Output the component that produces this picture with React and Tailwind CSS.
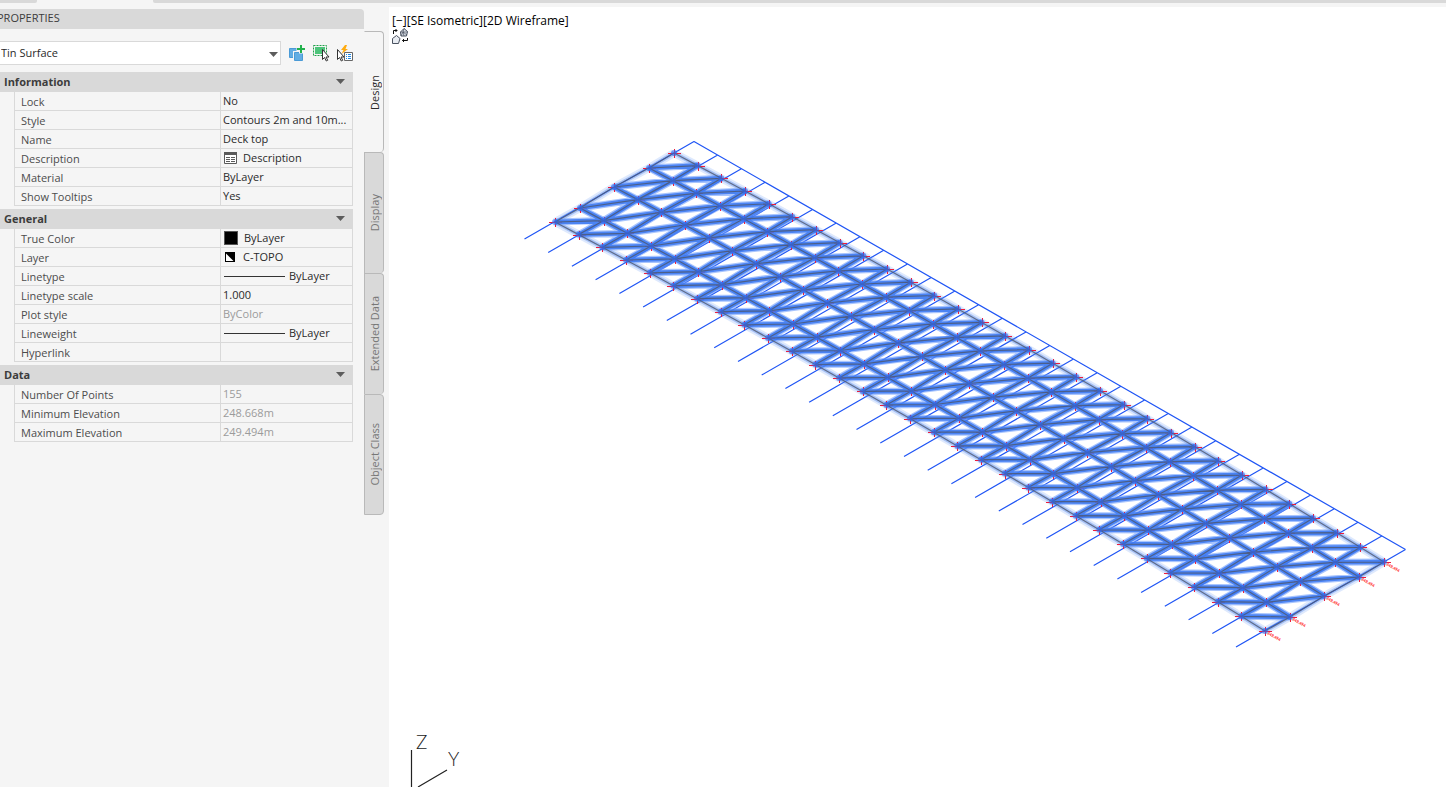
const sections = [
  {
    title: 'Information',
    rows: [
      { label: 'Lock', value: 'No' },
      { label: 'Style', value: 'Contours 2m and 10m...' },
      { label: 'Name', value: 'Deck top' },
      { label: 'Description', value: 'Description', kind: 'sheet' },
      { label: 'Material', value: 'ByLayer' },
      { label: 'Show Tooltips', value: 'Yes' },
    ],
  },
  {
    title: 'General',
    rows: [
      { label: 'True Color', value: 'ByLayer', kind: 'color' },
      { label: 'Layer', value: 'C-TOPO', kind: 'layer' },
      { label: 'Linetype', value: 'ByLayer', kind: 'line' },
      { label: 'Linetype scale', value: '1.000' },
      { label: 'Plot style', value: 'ByColor', muted: true },
      { label: 'Lineweight', value: 'ByLayer', kind: 'line' },
      { label: 'Hyperlink', value: '' },
    ],
  },
  {
    title: 'Data',
    rows: [
      { label: 'Number Of Points', value: '155', muted: true },
      { label: 'Minimum Elevation', value: '248.668m', muted: true },
      { label: 'Maximum Elevation', value: '249.494m', muted: true },
    ],
  },
]

const tabs = ['Design', 'Display', 'Extended Data', 'Object Class']

// surface grid: 31 stations along the deck, 5 points across it
const STATIONS = 31
const across = [[674, 153], [649, 168], [614, 187], [580, 208], [555, 222]]

function gridPoint(i, j) {
  const t = i / (STATIONS - 1)
  const [x, y] = across[j]
  return [x + 710 * t, y + 409 * t - 32 * t * (1 - t)]
}

function segment(a, b) {
  return `M${a[0].toFixed(1)} ${a[1].toFixed(1)}L${b[0].toFixed(1)} ${b[1].toFixed(1)}`
}

const inner = []
const border = []
const points = []
for (let i = 0; i < STATIONS; i++) {
  for (let j = 0; j < across.length; j++) {
    const p = gridPoint(i, j)
    points.push(p)
    if (i < STATIONS - 1) {
      const edge = j === 0 || j === across.length - 1
      ;(edge ? border : inner).push(segment(p, gridPoint(i + 1, j)))
      if (j > 0) inner.push(segment(p, gridPoint(i + 1, j - 1)))
    }
    if (j > 0) {
      const edge = i === 0 || i === STATIONS - 1
      ;(edge ? border : inner).push(segment(p, gridPoint(i, j - 1)))
    }
  }
}
const innerPath = inner.join('')
const borderPath = border.join('')
const crossPath = points
  .map(([x, y]) => `M${Math.round(x) - 6} ${Math.round(y) + 0.5}h13M${Math.round(x) + 0.5} ${Math.round(y) - 4}v9`)
  .join('')

const sectionPath = Array.from({ length: STATIONS }, (_, i) => {
  const x = (i * 711.5) / 30
  const y = i * 13.6
  return segment([694 + x, 141.5 + y], [524.5 + x, 239 + y])
}).join('')

function Caret({ className }) {
  return (
    <svg viewBox="0 0 9 5" className={`h-[5px] w-[9px] ${className}`} aria-hidden="true">
      <path d="M0 0h9L4.5 5z" fill="#5c5c5c" />
    </svg>
  )
}

function PickAddIcon() {
  return (
    <svg viewBox="0 0 17 17" className="size-[17px]" aria-hidden="true">
      <path d="M.5 3.5h8v9h-8z" fill="#62ade3" stroke="#4a9ad6" />
      <path d="M4 6h11v11H4z" fill="#f5f5f5" />
      <path d="M5.500 7.500h8v8h-8z" fill="#62ade3" stroke="#4a9ad6" />
      <path d="M12 0v8.500M7.500 4h9.500" stroke="#f5f5f5" strokeWidth="4" />
      <path d="M12 0v8M8 4h8" stroke="#22b14c" strokeWidth="2" />
    </svg>
  )
}

function SelectIcon() {
  return (
    <svg viewBox="0 0 17 17" className="size-[17px]" aria-hidden="true">
      <path d="M.5.5h13v10H.5z" fill="none" stroke="#22a04a" strokeDasharray="2 1" />
      <path d="M2 2h10v7H2z" fill="#4dc47a" />
      <path d="M9.500 4.500v10l2-2 1.800 3.500 1.400-.7-1.700-3.300h3z" fill="#fff" stroke="#333" />
    </svg>
  )
}

function QuickSelectIcon() {
  return (
    <svg viewBox="0 0 17 17" className="size-[17px]" aria-hidden="true">
      <path d="M8 0L4 5h2.500L4.500 9 11 4H8.500L10 0z" fill="#ffab0f" />
      <path d="M.5 4.500v10l2-2 1.800 3.500 1.400-.7-1.700-3.300h3z" fill="#fff" stroke="#333" />
      <path d="M7.500 7.500h8v8h-8z" fill="#fff" stroke="#666" />
      <path d="M9 9.500h1m1 0h3M9 11.500h1m1 0h3M9 13.500h1m1 0h3" stroke="#1e88e5" />
    </svg>
  )
}

function SheetIcon() {
  return (
    <svg viewBox="0 0 13 12" className="h-3 w-[13px]" aria-hidden="true">
      <path d="M.5.5h12v11H.5z" fill="#fff" stroke="#5a5a5a" />
      <path d="M0 0h13v3H0z" fill="#5a5a5a" />
      <path d="M2 5.500h4m1 0h4M2 7.500h4m1 0h4M2 9.500h4m1 0h4" stroke="#5a5a5a" />
    </svg>
  )
}

function Value({ row }) {
  if (row.kind === 'sheet') {
    return <span className="flex items-center gap-[6px] pl-px"><SheetIcon />{row.value}</span>
  }
  if (row.kind === 'color') {
    return (
      <span className="flex items-center gap-[6px] pl-px">
        <span className="size-[14px] border border-[#555] bg-black" />{row.value}
      </span>
    )
  }
  if (row.kind === 'layer') {
    return (
      <span className="flex items-center gap-2 pl-[2px]">
        <svg viewBox="0 0 10 10" className="size-[10px]" aria-hidden="true">
          <path d="M0 0h10v10H0z" />
          <path d="M1 1.500L8.500 9H1z" fill="#fff" />
        </svg>
        {row.value}
      </span>
    )
  }
  if (row.kind === 'line') {
    return (
      <span className="flex items-center gap-1 pl-px">
        <span className="h-px w-[61px] bg-[#333]" />{row.value}
      </span>
    )
  }
  return row.value
}

function Section({ section }) {
  return (
    <section className="mb-[3px]">
      <h2>
        <button className="flex h-5 w-full items-center justify-between bg-[#d9d9d9] pr-2 pb-px pl-1 font-bold text-[#3c3c3c]">
          {section.title}
          <Caret className="" />
        </button>
      </h2>
      <div className="pl-[14px]">
        <table className="w-full table-fixed border-separate border-spacing-0 border-l border-[#d9d9d9]">
          <tbody>
            {section.rows.map((row) => (
              <tr key={row.label} className="h-[19px]">
                <th scope="row" className="w-[206px] border-r border-b border-[#d9d9d9] p-0 pt-[2px] pl-[6px] text-left font-normal text-[#4c4c4c]">
                  {row.label}
                </th>
                <td className={`border-r border-b border-[#d9d9d9] p-0 pl-[2px] whitespace-nowrap ${row.muted ? 'text-[#9b9b9b]' : 'text-[#2a2a2a]'}`}>
                  <Value row={row} />
                </td>
              </tr>
            ))}
          </tbody>
        </table>
      </div>
    </section>
  )
}

function PropertiesPanel() {
  return (
    <aside className="flex w-[389px] shrink-0 pt-[6px]">
      <div className="min-w-0 flex-1">
        <h1 className="h-5 rounded-tr-[4px] bg-[#d9d9d9] leading-[18px] text-[#3c3c3c]">
          <span className="-ml-[3px]">PROPERTIES</span>
        </h1>
        <div className="pt-3 pr-[11px]">
          <div className="-mr-px mb-[7px] flex items-center gap-[7px]">
            <div className="relative mr-px flex-1">
              <select aria-label="Object type" className="block h-6 w-full appearance-none border border-l-0 border-[#d9d9d9] bg-white pl-px text-[#2a2a2a]">
                <option>Tin Surface</option>
              </select>
              <Caret className="pointer-events-none absolute top-[11px] right-[3px]" />
            </div>
            <button aria-label="Toggle pick add"><PickAddIcon /></button>
            <button aria-label="Select objects"><SelectIcon /></button>
            <button aria-label="Quick select"><QuickSelectIcon /></button>
          </div>
          {sections.map((section) => <Section key={section.title} section={section} />)}
        </div>
      </div>
      <div role="tablist" className="mr-[5px] w-5 shrink-0 pt-[22px]">
        {tabs.map((tab, i) => (
          <button key={tab} role="tab" aria-selected={i === 0}
            className={`flex h-[121px] w-full items-center justify-center rounded-r-[4px] border border-[#b9b9b9] pl-[2px] ${
              i === 0 ? 'border-b-0 border-l-transparent text-[#2a2a2a]' : 'border-b-0 bg-[#d9d9d9] text-[#777] last:border-b'}`}>
            <span className="rotate-180 [writing-mode:vertical-rl]">{tab}</span>
          </button>
        ))}
      </div>
    </aside>
  )
}

function Drawing() {
  const labels = across.map((_, j) => gridPoint(STATIONS - 1, j))
  return (
    <svg viewBox="389 7 1057 780" className="block w-full" role="img" aria-label="Tin surface wireframe">
      <path d={sectionPath + 'M694 141.500L1405.500 549.500'} fill="none" stroke="#1f55f5" strokeWidth="1.2" />
      <g fill="none">
        <path d={borderPath} stroke="#5c90f5" strokeOpacity="0.2" strokeWidth="8" />
        <path d={borderPath} stroke="#3f78e8" strokeOpacity="0.35" strokeWidth="4" />
        <path d={innerPath} stroke="#6f9ffb" strokeOpacity="0.6" strokeWidth="7" />
        <path d={crossPath} stroke="#ee1c3a" />
        <path d={innerPath} stroke="#3b78f2" strokeOpacity="0.85" strokeWidth="4.5" />
        <path d={innerPath + borderPath} stroke="#4c566e" strokeOpacity="0.8" strokeWidth="1.2" />
      </g>
      {points.map(([x, y], i) => (
        <circle key={i} cx={x} cy={y} r="3" fill="#2f68ee" fillOpacity="0.6" />
      ))}
      {labels.map(([x, y], i) => (
        <text key={i} transform={`translate(${x + 2} ${y + 3}) rotate(29)`} fill="#f22" className="font-['Liberation_Sans'] text-[4px] font-bold">
          249.494
        </text>
      ))}
      <path d="M411.500 750v37M418 787l29-17" stroke="#222" strokeWidth="1.2" />
      <text x="416" y="749" fill="#222" className="font-[Lato] text-[19px] font-light">Z</text>
      <text x="448" y="766" fill="#222" className="font-[Lato] text-[19px] font-light">Y</text>
    </svg>
  )
}

function Viewport() {
  return (
    <main className="relative mt-1 min-w-0 flex-1 bg-white">
      <div className="absolute top-[6px] left-[3px] text-[12px] text-black">
        <div className="flex leading-4">
          <button>[−]</button>
          <button>[SE Isometric]</button>
          <button>[2D Wireframe]</button>
        </div>
        <svg viewBox="0 0 16 16" className="-mt-px size-4" aria-hidden="true">
          <path d="M1.500 6V2.500H5M3.500 1L5 2.500 3.500 4" fill="none" stroke="#111" />
          <path d="M15.500 10v2.500h-5M12 11l-1.500 1.500L12 14" fill="none" stroke="#111" />
          <path d="M12 .5l3.500 3-1 4.500H9l-.5-4z" fill="#dde3ea" stroke="#4a5260" />
          <path d="M8.500 4h7M12 .5L11 4l1 4M15 7l-4-3-2 4" fill="none" stroke="#4a5260" strokeWidth=".7" />
          <path d="M.5 10.500l4-3 3.500 3-1.500 5h-6z" fill="#e8ecf2" stroke="#4a5260" />
        </svg>
      </div>
      <Drawing />
    </main>
  )
}

export default function App() {
  return (
    <div className="flex h-screen flex-col overflow-hidden bg-[#f5f5f5] font-['Open_Sans','Noto_Sans',sans-serif] text-[11px] leading-4">
      <header className="flex h-[3px] shrink-0">
        <div className="w-[37px] rounded-br-[2px] bg-[#d9d9d9]" />
        <div className="ml-[116px] flex-1 rounded-bl-[2px] bg-[#d9d9d9]" />
      </header>
      <div className="flex min-h-0 flex-1">
        <PropertiesPanel />
        <Viewport />
      </div>
    </div>
  )
}
